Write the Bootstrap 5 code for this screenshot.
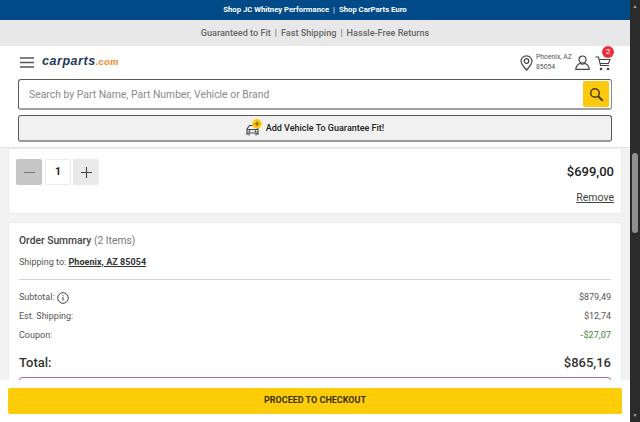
<!DOCTYPE html>
<html lang="en">
<head>
<meta charset="utf-8">
<title>Cart</title>
<link href="https://cdn.jsdelivr.net/npm/bootstrap@5.3.0/dist/css/bootstrap.min.css" rel="stylesheet">
<style>
html,body{height:422px;overflow:hidden;background:#2b2b2b;}
body{font-family:Roboto,"Liberation Sans",sans-serif;color:#333;font-size:10px;}
.shell{height:422px;width:640px;}
.viewport{flex:0 0 630px;width:630px;height:422px;position:relative;background:#f2f2f2;}
.sbar{flex:0 0 10px;width:10px;height:422px;background:#2b2b2b;}
.sarrow{height:13px;color:#a8a8a8;font-size:5px;line-height:13px;text-align:center;overflow:hidden;}
.sgap{height:140px;}
.sthumb{width:6px;height:80px;margin:0 auto;border-radius:3px;background:#8f8f8f;}
.strack{flex:1;}
.promo{height:21px;background:#004b87;color:#fff;font-size:7.7px;font-weight:700;border-bottom:1px solid #e8e8e8;}
.trust{height:25px;background:#e8e8e8;color:#666;font-size:9.1px;font-weight:500;}
.sepx{margin:0 4px;font-weight:400;}
.head{background:#fff;height:102px;padding:0 18px;border-bottom:1px solid #e4e4e4;}
.toprow{height:33px;padding-left:2px;}
.logo{font-family:"Liberation Sans",sans-serif;font-weight:700;font-style:italic;font-size:12.5px;color:#1f3a5c;margin-left:8px;letter-spacing:.55px;line-height:1;margin-top:-2px;}
.logo span{color:#f08a24;font-size:9.5px;letter-spacing:.2px;}
.loctext{font-size:6.8px;line-height:10.500px;color:#555;margin-left:3px;width:39px;margin-top:-1px;}
.cartwrap{position:relative;width:22px;height:20px;}
.cartbadge{position:absolute;top:-7px;right:-2px;width:12px;height:12px;border-radius:50%;background:#e8313f;color:#fff;font-size:8px;line-height:12px;text-align:center;}
.searchbox{height:31px;border:1px solid #5a5a5a;border-bottom-width:2px;border-bottom-color:#a0a0a0;border-right-color:#8a8a8a;border-radius:3px;padding:0 2px 0 10px;color:#8a8a8a;font-size:10.4px;}
.searchbox span{padding-top:1px;}
.searchbtn{width:26px;height:26px;background:#fdc90f;border-radius:2px;}
.addbtn{height:27px;margin-top:5px;border:1px solid #5a5a5a;border-bottom-width:2px;border-bottom-color:#9a9a9a;border-radius:3px;background:#f1f1f1;font-size:9px;font-weight:500;color:#222;}
.addbtn span{padding-top:1px;}
.mainarea{padding:0 8px;min-height:0;overflow:hidden;}
.pcard{background:#fff;border:1px solid #ececec;border-radius:2px;}
.itemcard{height:66px;padding:10px 7px 0 7px;}
.qb{width:26px;height:26px;border-radius:2px;}
.qminus{background:#c6c6c6;}
.qplus{background:#e9e9e9;margin-left:2px;}
.qnum{background:#fff;border:1px solid #ececec;margin-left:3px;font-size:10.5px;font-weight:700;color:#222;}
.price{font-size:13px;font-weight:500;color:#222;line-height:26px;}
.removelink{color:#444;font-size:10.5px;text-decoration:underline;margin-top:6px;line-height:14px;}
.sumcard{margin-top:8px;padding:9px 10px 0 10px;height:200px;}
.sumtitle{font-size:10.3px;font-weight:500;color:#444;line-height:16px;margin-top:1px;}
.sumtitle span{font-weight:400;color:#777;}
.shipto{font-size:9px;color:#555;margin-top:6px;line-height:14px;padding-bottom:10px;border-bottom:1px solid #d5d5d5;}
.shipto a{color:#333;font-weight:700;letter-spacing:.05px;}
.line{font-size:9px;color:#555;height:19px;}
.lines{padding-top:8px;}
.green{color:#5f9a55;font-weight:500;}
.totalrow{font-size:13px;font-weight:500;color:#333;margin-top:7px;line-height:22px;}
.promobox{height:30px;border:1px solid #b06a90;border-radius:3px;margin-top:3px;}
.footbar{position:absolute;left:0;right:0;bottom:0;height:42px;background:#fff;padding:8px 8px 0;}
.checkout{height:26px;background:#fdcd0a;border-radius:2px;font-size:9px;font-weight:700;color:#3a3000;}
</style>
</head>
<body>
<div class="shell d-flex">
  <div class="viewport d-flex flex-column">
    <div class="promo d-flex justify-content-center align-items-center"><span>Shop JC Whitney Performance</span><span class="sepx">|</span><span>Shop CarParts Euro</span></div>
    <div class="trust d-flex justify-content-center align-items-center"><span>Guaranteed to Fit</span><span class="sepx">|</span><span>Fast Shipping</span><span class="sepx">|</span><span>Hassle-Free Returns</span></div>
    <div class="head">
      <div class="toprow d-flex align-items-center">
        <svg viewBox="0 0 14 11" width="14" height="11"><path d="M0 1h14M0 5.500h14M0 10h14" stroke="#555" stroke-width="1.300"/></svg>
        <div class="logo">carparts<span>.com</span></div>
        <div class="ms-auto d-flex align-items-center">
          <svg width="13" height="16" viewBox="0 0 13 16"><path d="M6.500.8C3.300.8 1 3.200 1 6.100c0 3.500 3.700 6.700 5.500 9 1.800-2.300 5.500-5.500 5.500-9C12 3.200 9.700.8 6.500.8z" fill="none" stroke="#444" stroke-width="1.200"/><circle cx="6.500" cy="6" r="2.300" fill="none" stroke="#444" stroke-width="1.200"/></svg>
          <div class="loctext">Phoenix, AZ<br>85054</div>
          <svg width="15" height="15" viewBox="0 0 15 15"><circle cx="7.500" cy="4.500" r="3.500" fill="none" stroke="#444" stroke-width="1.200"/><path d="M.8 14.300c0-3.500 3-5.600 4.200-5.800 1.400.6 3.600.6 5 0 1.200.2 4.200 2.300 4.200 5.800z" fill="none" stroke="#444" stroke-width="1.200"/></svg>
          <div class="cartwrap">
            <svg width="16" height="15" viewBox="0 0 16 15" style="position:absolute;left:5px;top:3px"><path d="M.5 1h3l2 8.500h8.500M4 3.500h11l-1.500 4H5" fill="none" stroke="#444" stroke-width="1.100"/><circle cx="6" cy="13" r="1.300" fill="#444"/><circle cx="13" cy="13" r="1.300" fill="#444"/></svg>
            <div class="cartbadge">2</div>
          </div>
        </div>
      </div>
      <div class="searchbox d-flex align-items-center justify-content-between">
        <span>Search by Part Name, Part Number, Vehicle or Brand</span>
        <div class="searchbtn d-flex align-items-center justify-content-center">
          <svg width="15" height="15" viewBox="0 0 15 15"><circle cx="6" cy="6" r="4.300" fill="none" stroke="#4a3b08" stroke-width="1.500"/><path d="M9.200 9.200l4.500 4.500" stroke="#4a3b08" stroke-width="2"/></svg>
        </div>
      </div>
      <div class="addbtn d-flex align-items-center justify-content-center">
        <svg width="16" height="17" viewBox="0 0 16 17" class="me-1" style="margin-top:-1px"><path d="M1 16v-6l2.500-3.500h6L12 10v6M1 10.500h11M1 14h11M3 14v2.500M10 14v2.500" fill="none" stroke="#444" stroke-width="1.100"/><circle cx="3.500" cy="12.200" r=".9" fill="#444"/><circle cx="9.500" cy="12.200" r=".9" fill="#444"/><circle cx="11" cy="4.800" r="4.800" fill="#fdc90f"/><path d="M11 2.300v5M8.500 4.800h5" stroke="#5a4500" stroke-width=".8"/></svg>
        <span>Add Vehicle To Guarantee Fit!</span>
      </div>
    </div>
    <div class="mainarea flex-grow-1">
      <div class="pcard itemcard">
        <div class="d-flex justify-content-between">
          <div class="d-flex">
            <div class="qb qminus d-flex align-items-center justify-content-center"><svg width="11" height="11" viewBox="0 0 11 11"><path d="M0 5.500h11" stroke="#7a7a7a" stroke-width="1.100"/></svg></div>
            <div class="qb qnum d-flex align-items-center justify-content-center">1</div>
            <div class="qb qplus d-flex align-items-center justify-content-center"><svg width="11" height="11" viewBox="0 0 11 11"><path d="M0 5.500h11M5.500 0v11" stroke="#444" stroke-width="1.100"/></svg></div>
          </div>
          <div class="price">$699,00</div>
        </div>
        <div class="text-end removelink">Remove</div>
      </div>
      <div class="pcard sumcard">
        <div class="sumtitle">Order Summary <span>(2 Items)</span></div>
        <div class="shipto">Shipping to: <a href="#">Phoenix, AZ 85054</a></div>
        <div class="lines">
          <div class="line d-flex justify-content-between align-items-center">
            <span class="d-flex align-items-center">Subtotal:<svg width="12" height="12" viewBox="0 0 12 12" style="margin-left:2px"><circle cx="6" cy="6" r="5.300" fill="none" stroke="#444"/><path d="M6 5v3.500M6 3.200v1" stroke="#444"/></svg></span><span>$879,49</span>
          </div>
          <div class="line d-flex justify-content-between align-items-center"><span>Est. Shipping:</span><span>$12,74</span></div>
          <div class="line d-flex justify-content-between align-items-center"><span>Coupon:</span><span class="green">-$27,07</span></div>
        </div>
        <div class="totalrow d-flex justify-content-between"><span>Total:</span><span>$865,16</span></div>
        <div class="promobox"></div>
      </div>
    </div>
    <div class="footbar">
      <div class="checkout d-flex align-items-center justify-content-center">PROCEED TO CHECKOUT</div>
    </div>
  </div>
  <div class="sbar d-flex flex-column">
    <div class="sarrow">&#9650;</div>
    <div class="sgap"></div>
    <div class="sthumb"></div>
    <div class="strack"></div>
    <div class="sarrow">&#9660;</div>
  </div>
</div>
<script src="https://cdn.jsdelivr.net/npm/bootstrap@5.3.0/dist/js/bootstrap.bundle.min.js"></script>
</body>
</html>
